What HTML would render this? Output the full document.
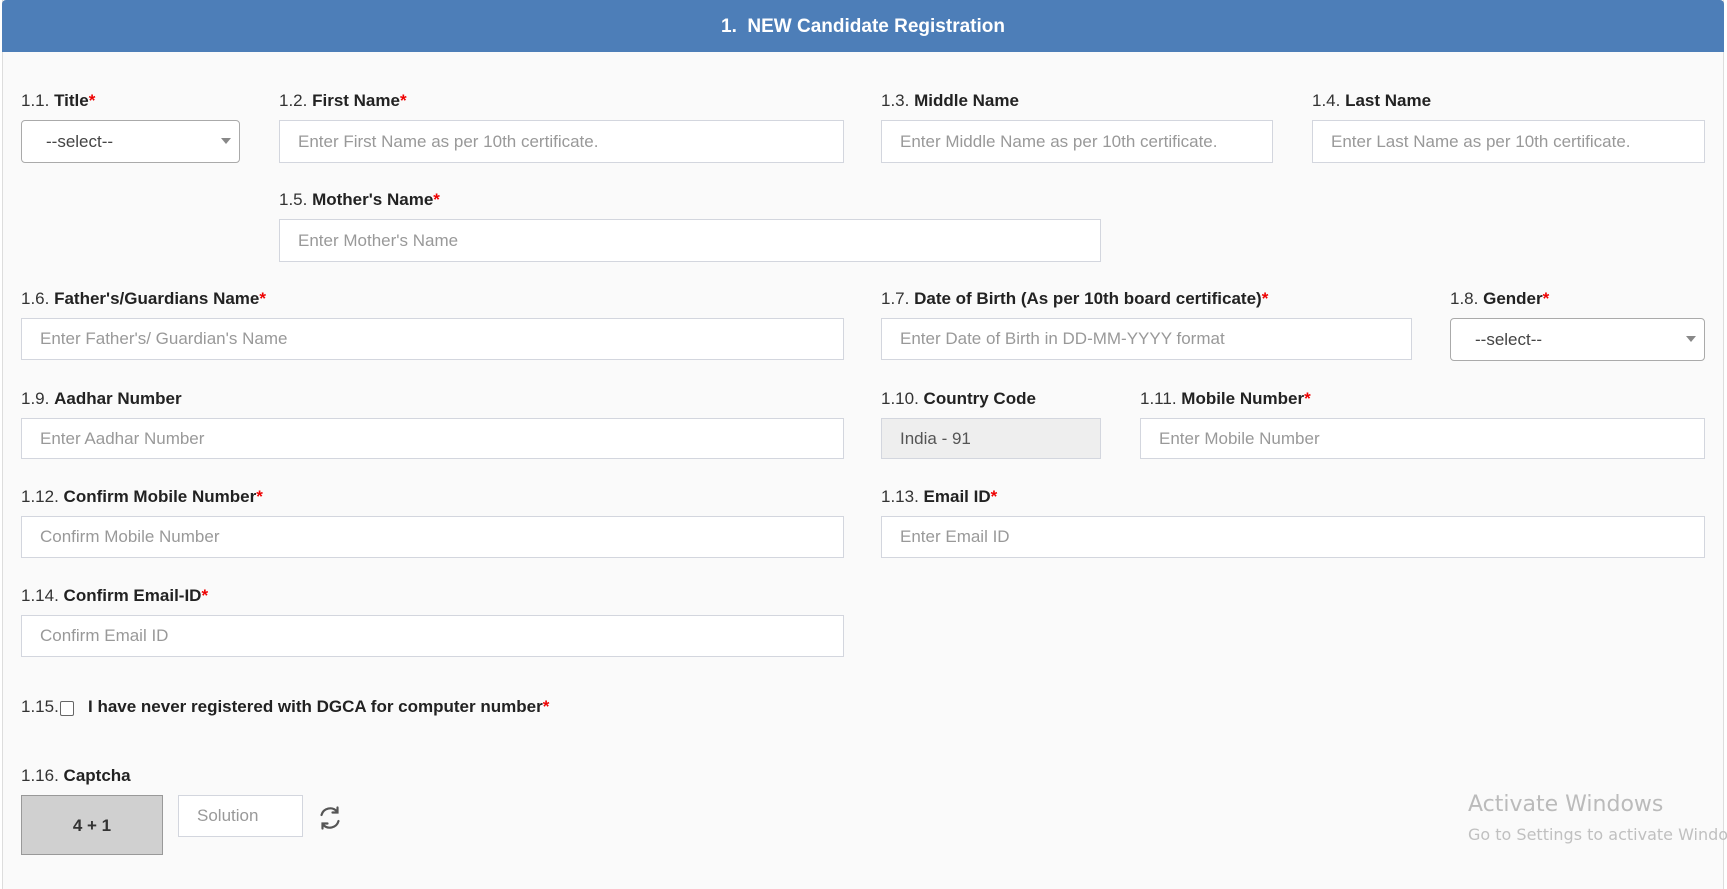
<!DOCTYPE html>
<html><head><meta charset="utf-8"><style>
*{box-sizing:border-box;margin:0;padding:0}
body{width:1727px;height:889px;background:#fff;font-family:"Liberation Sans",Arial,sans-serif;position:relative;overflow:hidden}
.panel{position:absolute;left:2px;top:0;width:1722px;height:889px;background:#fafafa;border-right:1px solid #ddd;border-left:1px solid #ddd}
.hdr{position:absolute;left:2px;top:0;width:1722px;height:52px;background:#4d7eb8;color:#fff;font-weight:bold;font-size:19px;text-align:center;line-height:54px;border-radius:4px 4px 0 0}
.l{position:absolute;font-size:17px;color:#333;white-space:nowrap}
.l b{color:#222}
.l i{color:#e00;font-style:normal;font-weight:bold}
.in{position:absolute;background:#fff;border:1px solid #d3d6de;font-size:17px;color:#999;padding-left:18px;display:flex;align-items:center;white-space:nowrap;overflow:hidden}
.sel{position:absolute;background:#fff;border:1px solid #aaa;border-radius:4px;font-size:17px;color:#444;padding-left:24px;display:flex;align-items:center}
.sel:after{content:"";position:absolute;right:8px;top:17px;border-left:5px solid transparent;border-right:5px solid transparent;border-top:6px solid #888}
</style></head><body>
<div class="panel"></div>
<div class="hdr">1.&nbsp; NEW Candidate Registration</div>

<div class="l" style="left:21px;top:91px">1.1. <b>Title</b><i>*</i></div>
<div class="sel" style="left:21px;top:120px;width:219px;height:43px">--select--</div>
<div class="l" style="left:279px;top:91px">1.2. <b>First Name</b><i>*</i></div>
<div class="in" style="left:279px;top:120px;width:565px;height:43px">Enter First Name as per 10th certificate.</div>
<div class="l" style="left:881px;top:91px">1.3. <b>Middle Name</b></div>
<div class="in" style="left:881px;top:120px;width:392px;height:43px">Enter Middle Name as per 10th certificate.</div>
<div class="l" style="left:1312px;top:91px">1.4. <b>Last Name</b></div>
<div class="in" style="left:1312px;top:120px;width:393px;height:43px">Enter Last Name as per 10th certificate.</div>

<div class="l" style="left:279px;top:190px">1.5. <b>Mother's Name</b><i>*</i></div>
<div class="in" style="left:279px;top:219px;width:822px;height:43px">Enter Mother's Name</div>

<div class="l" style="left:21px;top:289px">1.6. <b>Father's/Guardians Name</b><i>*</i></div>
<div class="in" style="left:21px;top:318px;width:823px;height:42px">Enter Father's/ Guardian's Name</div>
<div class="l" style="left:881px;top:289px">1.7. <b>Date of Birth (As per 10th board certificate)</b><i>*</i></div>
<div class="in" style="left:881px;top:318px;width:531px;height:42px">Enter Date of Birth in DD-MM-YYYY format</div>
<div class="l" style="left:1450px;top:289px">1.8. <b>Gender</b><i>*</i></div>
<div class="sel" style="left:1450px;top:318px;width:255px;height:43px">--select--</div>

<div class="l" style="left:21px;top:389px">1.9. <b>Aadhar Number</b></div>
<div class="in" style="left:21px;top:418px;width:823px;height:41px">Enter Aadhar Number</div>
<div class="l" style="left:881px;top:389px">1.10. <b>Country Code</b></div>
<div class="in" style="left:881px;top:418px;width:220px;height:41px;background:#eee;color:#555">India - 91</div>
<div class="l" style="left:1140px;top:389px">1.11. <b>Mobile Number</b><i>*</i></div>
<div class="in" style="left:1140px;top:418px;width:565px;height:41px">Enter Mobile Number</div>

<div class="l" style="left:21px;top:487px">1.12. <b>Confirm Mobile Number</b><i>*</i></div>
<div class="in" style="left:21px;top:516px;width:823px;height:42px">Confirm Mobile Number</div>
<div class="l" style="left:881px;top:487px">1.13. <b>Email ID</b><i>*</i></div>
<div class="in" style="left:881px;top:516px;width:824px;height:42px">Enter Email ID</div>

<div class="l" style="left:21px;top:586px">1.14. <b>Confirm Email-ID</b><i>*</i></div>
<div class="in" style="left:21px;top:615px;width:823px;height:42px">Confirm Email ID</div>

<div class="l" style="left:21px;top:697px">1.15.</div>
<div style="position:absolute;left:60px;top:701px;width:14px;height:15px;border:1px solid #666;border-radius:2px;background:#fff"></div>
<div class="l" style="left:88px;top:697px"><b>I have never registered with DGCA for computer number</b><i>*</i></div>

<div class="l" style="left:21px;top:766px">1.16. <b>Captcha</b></div>
<div style="position:absolute;left:21px;top:795px;width:142px;height:60px;background:#d0d0d0;border:1px solid #999;font-weight:bold;font-size:17px;color:#333;text-align:center;line-height:60px">4 + 1</div>
<div class="in" style="left:178px;top:795px;width:125px;height:42px;padding-left:18px">Solution</div>
<svg style="position:absolute;left:316px;top:804px" width="28" height="28" viewBox="0 0 28 28" fill="none" stroke="#555" stroke-width="2.2" stroke-linecap="round">
<path d="M5.5 11 A9 9 0 0 1 21 7.5"/><path d="M22.5 17 A9 9 0 0 1 7 20.5"/>
<path d="M21.5 3.5 L21.5 8.5 L16.5 8.5"/><path d="M6.5 24.5 L6.5 19.5 L11.5 19.5"/>
</svg>

<div style="position:absolute;left:1468px;top:792px;font-family:'DejaVu Sans',sans-serif;font-size:22px;color:#bbb">Activate Windows</div>
<div style="position:absolute;left:1468px;top:825px;font-family:'DejaVu Sans',sans-serif;font-size:16px;color:#c0c0c0;white-space:nowrap">Go to Settings to activate Windows.</div>
</body></html>
